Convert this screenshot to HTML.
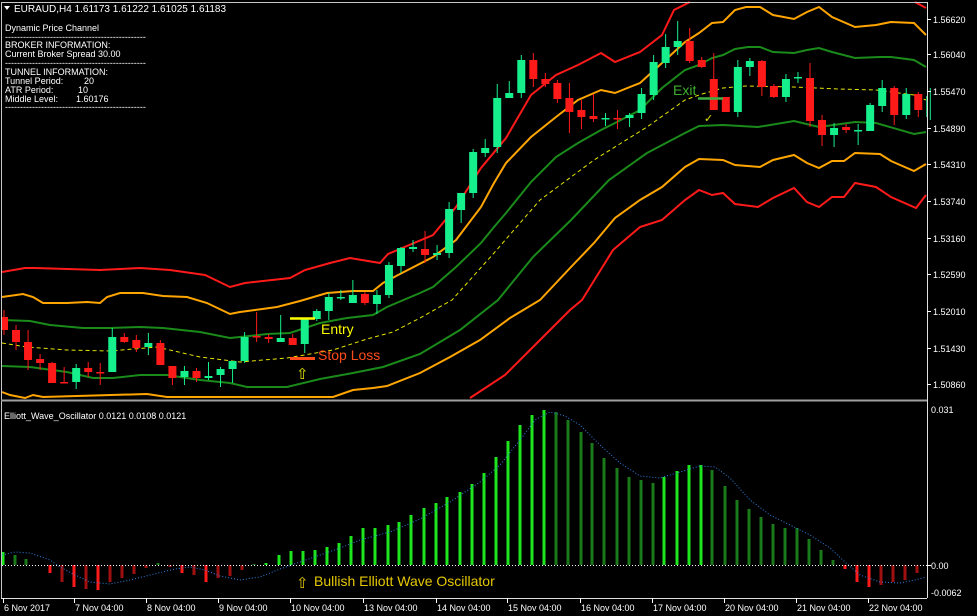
<!DOCTYPE html>
<html><head><meta charset="utf-8"><style>
html,body{margin:0;padding:0;background:#000;width:977px;height:616px;overflow:hidden}
svg{display:block}
text{font-family:"Liberation Sans",sans-serif}
</style></head><body>
<svg id="s" width="977" height="616" viewBox="0 0 977 616" xmlns="http://www.w3.org/2000/svg">
<rect width="977" height="616" fill="#000"/>
<g id="lines"></g>
<g id="main"></g>
<g id="osc"></g>
<!-- frames -->
<line x1="1.5" y1="2" x2="1.5" y2="598" stroke="#c8c8c8" stroke-width="1"/>
<line x1="1" y1="2.5" x2="927" y2="2.5" stroke="#c8c8c8" stroke-width="1"/>
<line x1="927.5" y1="2" x2="927.5" y2="598" stroke="#e0e0e0" stroke-width="1"/>
<line x1="1" y1="400.5" x2="927" y2="400.5" stroke="#a0a0a0" stroke-width="2"/>
<line x1="1" y1="598.5" x2="927" y2="598.5" stroke="#e0e0e0" stroke-width="1"/>
<line x1="2" y1="565.5" x2="927" y2="565.5" stroke="#fff" stroke-width="1" stroke-dasharray="1,2"/>
<!-- header -->
<polygon points="4,6 10,6 7,10" fill="#fff"/>
<text x="14" y="12" font-size="10" fill="#fff">EURAUD,H4  1.61173 1.61222 1.61025 1.61183</text>
<g font-size="9" fill="#fff">
<text x="5" y="31">Dynamic Price Channel</text>
<text x="5" y="40">-----------------------------------------------</text>
<text x="5" y="48">BROKER INFORMATION:</text>
<text x="5" y="57">Current Broker Spread 30.00</text>
<text x="5" y="66">-----------------------------------------------</text>
<text x="5" y="75">TUNNEL INFORMATION:</text>
<text x="5" y="84">Tunnel Period:</text><text x="84" y="84">20</text>
<text x="5" y="93">ATR Period:</text><text x="78" y="93">10</text>
<text x="5" y="102">Middle Level:</text><text x="76" y="102">1.60176</text>
<text x="5" y="110">-----------------------------------------------</text>
</g>
<text x="4" y="419" font-size="9" fill="#fff">Elliott_Wave_Oscillator 0.0121 0.0108 0.0121</text>
<!-- price axis -->
<g font-size="9" fill="#fff" id="pax"></g>
<g font-size="9" fill="#fff">
<text x="931" y="413">0.031</text>
<text x="931" y="569">0.00</text>
<text x="931" y="596">-0.0062</text>
<line x1="927" y1="565.5" x2="931" y2="565.5" stroke="#fff"/>
</g>
<g font-size="9" fill="#fff" id="tax"></g>
<!-- annotations -->
<line x1="290" y1="318.5" x2="315" y2="318.5" stroke="#ffff00" stroke-width="2.5"/>
<text x="321" y="334" font-size="14" fill="#ffff00">Entry</text>
<line x1="290" y1="358.5" x2="315" y2="358.5" stroke="#ff4c1c" stroke-width="3"/>
<text x="318" y="360" font-size="14" fill="#ff4c1c">Stop Loss</text>
<text x="296" y="379" font-size="15" fill="#e6e600">⇧</text>
<text x="673" y="95" font-size="14" fill="#3cae2c">Exit</text>
<line x1="698" y1="98.5" x2="723" y2="98.5" stroke="#3cb043" stroke-width="2.5"/>
<text x="704" y="122" font-size="11" fill="#e6e600">✓</text>
<text x="296" y="588" font-size="15" fill="#e6c800">⇧</text>
<text x="314" y="586" font-size="14" fill="#e6c800">Bullish Elliott Wave Oscillator</text>
</svg>
<script>
var NS="http://www.w3.org/2000/svg";
function el(p,t,a){var e=document.createElementNS(NS,t);for(var k in a)e.setAttribute(k,a[k]);p.appendChild(e);return e;}
var M=document.getElementById("main"),O=document.getElementById("osc"),L=document.getElementById("lines");
function pl(p,pts,c,w,d){var a={points:pts.map(function(q){return q.join(",")}).join(" "),fill:"none",stroke:c,"stroke-width":w};if(d)a["stroke-dasharray"]=d;el(p,"polyline",a);}
pl(L,[[2,272],[25,268],[35,268],[100,270],[140,268],[170,270],[205,275],[230,287],[245,283],[290,278],[305,270],[330,263],[350,258],[380,263],[388,254],[433,235],[456,207],[481,168],[506,138],[531,95],[556,75],[578,65],[601,53],[615,62],[640,52],[662,35],[674,10],[690,2]],"#ff1a1a",2);
pl(L,[[915,2],[926,8]],"#ff1a1a",2);
pl(L,[[470,398],[505,375],[540,340],[570,310],[582,300],[613,250],[640,227],[662,220],[685,200],[699,190],[712,195],[723,193],[735,204],[758,207],[773,198],[794,188],[807,202],[819,207],[832,197],[844,197],[855,183],[876,187],[891,197],[916,208],[926,195]],"#ff1a1a",2);
pl(L,[[2,297],[23,294],[33,297],[43,303],[67,303],[87,302],[100,303],[107,297],[120,293],[143,293],[163,296],[187,297],[207,303],[230,314],[240,312],[277,307],[300,301],[327,293],[353,291],[373,291],[383,283],[400,274],[433,257],[456,240],[481,207],[494,183],[506,163],[531,137],[556,117],[578,100],[601,90],[615,93],[640,83],[662,63],[685,42],[699,33],[712,23],[723,22],[735,10],[746,7],[760,7],[773,15],[794,19],[807,12],[819,7],[832,17],[855,27],[876,25],[891,22],[914,23],[926,35]],"#ffa500",2);
pl(L,[[2,392],[10,395],[25,398],[33,395],[43,397],[147,394],[167,397],[333,397],[353,390],[373,388],[387,386],[420,373],[450,357],[480,340],[510,318],[540,300],[571,267],[594,243],[615,218],[640,200],[662,187],[685,167],[699,159],[723,160],[735,165],[760,167],[773,160],[794,155],[807,163],[819,168],[832,161],[844,161],[855,153],[880,154],[891,161],[914,171],[926,164]],"#ffa500",2);
pl(L,[[2,320],[30,321],[50,325],[83,328],[110,328],[140,327],[163,328],[200,332],[230,338],[240,337],[267,334],[290,333],[320,323],[347,318],[373,315],[387,307],[420,293],[433,287],[456,267],[481,243],[494,227],[506,213],[531,182],[556,157],[578,143],[601,130],[615,123],[640,110],[662,88],[685,70],[699,65],[712,58],[723,55],[735,49],[748,47],[760,47],[773,52],[794,53],[807,50],[819,48],[832,52],[855,58],[880,57],[891,57],[914,60],[926,67]],"#1a8a1a",2);
pl(L,[[2,366],[30,367],[67,372],[93,378],[113,378],[140,375],[167,375],[200,380],[230,383],[247,387],[287,387],[320,379],[353,373],[383,367],[420,354],[460,330],[498,300],[533,257],[571,220],[609,180],[647,153],[685,133],[699,126],[723,125],[758,127],[794,121],[819,127],[855,122],[876,123],[914,134],[926,132]],"#1a8a1a",2);
pl(L,[[2,343],[27,347],[67,350],[110,351],[157,347],[200,357],[240,362],[287,358],[333,350],[367,339],[393,332],[420,318],[452,300],[494,253],[540,200],[594,160],[647,127],[685,100],[702,94],[723,88],[746,86],[794,87],[838,89],[876,90],[914,95],[926,100]],"#e6e600",1,"4,3");
var C=[[317,330,310,335,'r'],[330,342,325,350,'r'],[342,360,330,370,'r'],[359,363,354,370,'r'],[363,383,362,383,'r'],[382,383,367,383,'r'],[368,382,364,389,'g'],[368,372,362,377,'r'],[372,373,363,385,'r'],[337,372,328,372,'g'],[337,342,333,343,'r'],[340,348,335,352,'r'],[343,347,333,355,'g'],[343,365,340,365,'r'],[366,378,366,385,'r'],[371,377,366,385,'g'],[371,378,368,382,'r'],[376,378,362,380,'g'],[369,375,367,387,'g'],[361,369,361,383,'g'],[337,361,332,363,'g'],[336,337,312,342,'r'],[337,339,334,343,'r'],[338,342,315,342,'g'],[338,345,334,345,'r'],[319,344,318,353,'g'],[311,319,309,321,'g'],[297,311,293,320,'g'],[297,298,290,300,'g'],[295,303,280,303,'g'],[294,303,292,305,'r'],[295,304,290,314,'g'],[265,295,262,298,'g'],[248,266,247,273,'g'],[247,249,240,252,'g'],[249,255,231,263,'r'],[253,255,245,260,'g'],[209,253,202,258,'g'],[193,210,193,223,'g'],[152,193,149,198,'g'],[148,153,139,157,'g'],[98,147,84,153,'g'],[93,98,81,98,'g'],[60,93,55,98,'g'],[60,79,53,87,'r'],[79,84,73,87,'r'],[83,99,80,103,'r'],[98,112,83,133,'r'],[110,117,100,129,'r'],[116,119,94,122,'r'],[118,119,113,126,'g'],[118,119,110,129,'r'],[115,118,113,127,'g'],[94,113,88,119,'g'],[62,95,55,100,'g'],[47,63,34,68,'g'],[41,47,21,55,'g'],[41,61,28,63,'r'],[60,67,57,68,'r'],[79,110,53,110,'r'],[97,112,97,112,'r'],[67,112,60,117,'g'],[61,67,58,76,'g'],[61,87,60,96,'r'],[86,97,84,98,'r'],[79,97,74,102,'g'],[77,78,72,83,'g'],[78,121,63,127,'r'],[120,135,115,146,'r'],[128,135,123,147,'g'],[127,130,124,133,'r'],[130,131,124,145,'g'],[105,131,103,131,'g'],[88,106,80,112,'g'],[88,115,86,125,'r'],[94,115,88,119,'g'],[94,110,92,117,'r'],[96,117,88,120,'g']];
C.forEach(function(c,i){var x=4+12.03*i;var col=c[4]=='g'?'#16f08c':'#ff1a1a';
el(M,"line",{x1:x,y1:c[2],x2:x,y2:c[3],stroke:col,"stroke-width":1});
var h=Math.max(c[1]-c[0],1);var w=8,x0=x-4;if(x0<2){w-=2-x0;x0=2;}if(x0+w>927)w=927-x0;
if(h<=1)el(M,"rect",{x:x0,y:c[0],width:w,height:1.5,fill:col});else el(M,"rect",{x:x0,y:c[0],width:w,height:h,fill:col});});
var BG='#1ee61e',DG='#1a7a1a',BR='#ff1a1a',DR='#a01010';
var B=[[3,552,BG],[15,555,DG],[26,559,DG],[50,573,BR],[62,582,DR],[74,587,BR],[86,589,DR],[98,590,BR],[110,582,DR],[122,578,DR],[134,574,DR],[146,568,DR],[158,563,DG],[170,567,DR],[182,573,BR],[194,575,DR],[206,582,BR],[218,578,DR],[230,576,DR],[242,570,DR],[254,564,DG],[266,563,BG],[279,555,BG],[291,551,BG],[303,551,BG],[315,550,BG],[327,547,BG],[339,543,BG],[351,536,BG],[363,528,BG],[375,528,BG],[388,525,BG],[399,522,BG],[411,515,BG],[424,508,BG],[436,503,BG],[447,497,BG],[460,492,BG],[472,484,BG],[484,473,BG],[496,457,BG],[508,441,BG],[520,425,BG],[532,415,BG],[544,410,BG],[556,412,DG],[568,420,DG],[581,432,DG],[592,443,DG],[604,458,DG],[617,468,DG],[629,477,DG],[641,480,DG],[653,483,DG],[664,477,BG],[677,471,BG],[689,465,BG],[701,465,BG],[712,470,DG],[725,486,DG],[737,500,DG],[749,509,DG],[761,517,DG],[773,524,DG],[785,528,DG],[797,528,DG],[809,539,DG],[821,550,DG],[833,560,DG],[845,569,BR],[857,582,BR],[869,587,BR],[881,585,DR],[893,582,DR],[905,580,DR],[917,573,DR]];
B.forEach(function(b){var y1=Math.min(b[1],565),y2=Math.max(b[1],565);el(O,"rect",{x:b[0]-1.5,y:y1,width:3,height:y2-y1,fill:b[2]});});
pl(O,[[2,555],[15,552],[30,553],[50,560],[60,567],[75,575],[90,582],[110,584],[130,580],[150,575],[175,569],[190,567],[205,570],[220,576],[240,580],[260,577],[280,569],[300,562],[320,555],[340,548],[360,540],[390,532],[420,519],[450,502],[480,482],[500,465],[520,440],[535,420],[550,412],[565,416],[580,425],[600,445],[620,463],[640,476],[660,478],[680,472],[700,466],[715,467],[730,478],[750,500],[770,515],[790,525],[810,535],[830,548],[845,562],[860,575],[880,582],[900,583],[915,580],[926,577]],"#2f7fe0",1,"1,2");
var P=document.getElementById("pax");
[["1.56620",19],["1.56040",54],["1.55470",91],["1.54890",128],["1.54310",164],["1.53740",201],["1.53160",238],["1.52590",274],["1.52010",311],["1.51430",348],["1.50860",384]].forEach(function(p){
el(P,"line",{x1:927,y1:p[1]+.5,x2:931,y2:p[1]+.5,stroke:"#fff"});var t=el(P,"text",{x:933,y:p[1]+4});t.textContent=p[0];});
var T=document.getElementById("tax");
[["6 Nov 2017",3],["7 Nov 04:00",74],["8 Nov 04:00",146],["9 Nov 04:00",218],["10 Nov 04:00",290],["13 Nov 04:00",363],["14 Nov 04:00",436],["15 Nov 04:00",507],["16 Nov 04:00",580],["17 Nov 04:00",652],["20 Nov 04:00",724],["21 Nov 04:00",796],["22 Nov 04:00",868]].forEach(function(p){
el(T,"line",{x1:p[1]+.5,y1:598,x2:p[1]+.5,y2:603,stroke:"#fff"});var t=el(T,"text",{x:p[1]+1,y:611});t.textContent=p[0];});
</script>
</body></html>
